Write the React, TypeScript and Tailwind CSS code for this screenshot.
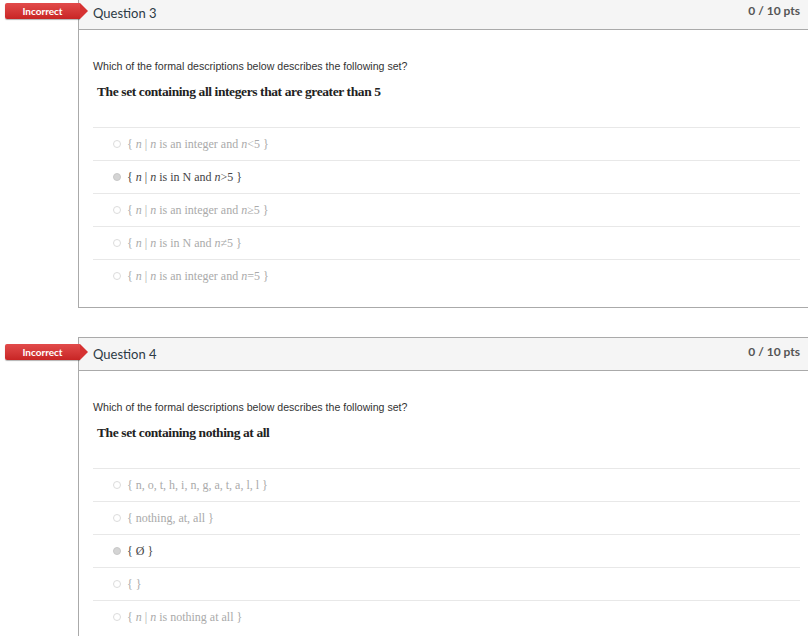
import React from "react";

type Ans = { node: React.ReactNode; selected?: boolean };

const I = ({ children }: { children: React.ReactNode }) => <i>{children}</i>;

function Radio({ selected }: { selected?: boolean }) {
  return selected ? (
    <span className="inline-block w-[8px] h-[8px] rounded-full bg-[#d4d4d4] border border-[#c8c8c8] mr-[6px]" />
  ) : (
    <span className="inline-block w-[8px] h-[8px] rounded-full border border-[#dcdcdc] bg-white mr-[6px]" />
  );
}

function Card({ num, set, answers, first }: { num: number; set: string; answers: Ans[]; first?: boolean }) {
  return (
    <div className={`relative ml-[78px] w-[740px] border border-[#aaaaaa] bg-white ${first ? "mt-[-4px]" : "mt-[29px]"}`}>
      <div className="absolute left-[-74px] top-[6px] flex items-center">
        <div className="h-[16px] w-[75px] bg-gradient-to-b from-[#e24b4b] to-[#c82424] rounded-l-[2px] flex items-center justify-center text-white text-[10px] font-bold font-['Lato',sans-serif] shadow-[0_1px_1px_rgba(0,0,0,0.3)]">
          Incorrect
        </div>
        <div className="w-0 h-0 border-t-[8px] border-b-[8px] border-l-[8px] border-t-transparent border-b-transparent border-l-[#d63232]" />
      </div>
      <div className="h-[33px] bg-[#f5f5f5] border-b border-[#aaaaaa] flex items-center justify-between pl-[14px] pr-[17px] font-['Lato',sans-serif]">
        <span className="text-[13px] text-[#2d3b45] mt-[1px]">Question {num}</span>
        <span className="text-[12px] font-bold text-[#555555] self-start mt-[5px]">0 / 10 pts</span>
      </div>
      <div className="pl-[14px] pr-[17px] pt-[29px] pb-[15px]">
        <div className="text-[10.6px] text-[#333333] font-['Liberation_Sans',Arial,sans-serif] leading-[14px]">
          Which of the formal descriptions below describes the following set?
        </div>
        <div className="mt-[10px] pl-[4px] text-[13.5px] font-bold text-[#222222] font-['Liberation_Serif',serif] tracking-[-0.4px] leading-[18px]">
          {set}
        </div>
        <div className="mt-[26px]">
          {answers.map((a, i) => (
            <div key={i} className="h-[33px] border-t border-[#e8e8e8] flex items-center pl-[20px]">
              <Radio selected={a.selected} />
              <span className={`text-[12px] font-['Liberation_Serif',serif] ${a.selected ? "text-[#444444]" : "text-[#aaaaaa]"}`}>
                {a.node}
              </span>
            </div>
          ))}
        </div>
      </div>
    </div>
  );
}

export default function App() {
  return (
    <div className="bg-white w-[808px] h-[636px] overflow-hidden">
      <Card
        first
        num={3}
        set="The set containing all integers that are greater than 5"
        answers={[
          { node: <>{"{ "}<I>n</I> | <I>n</I> is an integer and <I>n</I>&lt;5 {"}"}</> },
          { node: <>{"{ "}<I>n</I> | <I>n</I> is in N and <I>n</I>&gt;5 {"}"}</>, selected: true },
          { node: <>{"{ "}<I>n</I> | <I>n</I> is an integer and <I>n</I>≥5 {"}"}</> },
          { node: <>{"{ "}<I>n</I> | <I>n</I> is in N and <I>n</I>≠5 {"}"}</> },
          { node: <>{"{ "}<I>n</I> | <I>n</I> is an integer and <I>n</I>=5 {"}"}</> },
        ]}
      />
      <Card
        num={4}
        set="The set containing nothing at all"
        answers={[
          { node: <>{"{ n, o, t, h, i, n, g, a, t, a, l, l }"}</> },
          { node: <>{"{ nothing, at, all }"}</> },
          { node: <>{"{ Ø }"}</>, selected: true },
          { node: <>{"{ }"}</> },
          { node: <>{"{ "}<I>n</I> | <I>n</I> is nothing at all {"}"}</> },
        ]}
      />
    </div>
  );
}
